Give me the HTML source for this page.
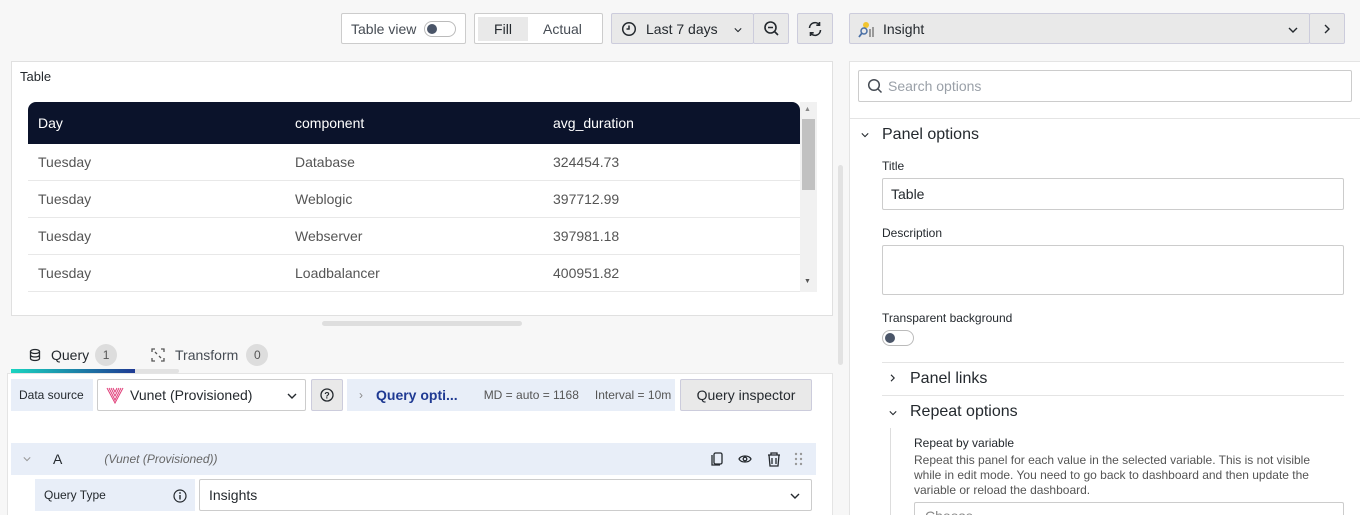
<!DOCTYPE html>
<html style="width:1360px;height:515px;overflow:hidden"><head><style>
*{box-sizing:border-box;margin:0;padding:0}
body{width:1360px;height:515px;overflow:hidden;background:#f7f7f7;font-family:"Liberation Sans",sans-serif;color:#24292e;position:relative;font-size:14px}
.a{position:absolute}
.btn{position:absolute;border:1px solid #ccccdc;border-radius:2px;background:#e9e9e9;display:flex;align-items:center}
.row{position:absolute;left:28px;width:772px;height:37px;border-bottom:1px solid #e8e8e8;display:flex;align-items:center;font-size:14px;color:#555}
.c1{position:absolute;left:10px}.c2{position:absolute;left:267px}.c3{position:absolute;left:525px}
.lbl{font-size:12px;color:#24292e}
.dn{position:absolute;width:10px;height:6px}
</style></head><body>
<svg width="0" height="0" style="position:absolute"><defs><path id="dn" d="M1 1l4 4 4-4" fill="none" stroke="#24292e" stroke-width="1.4"/><path id="rt" d="M1 1l4 4-4 4" fill="none" stroke="#24292e" stroke-width="1.4"/></defs></svg>
<!-- toolbar -->
<div class="a" style="left:341px;top:13px;width:125px;height:31px;border:1px solid #ccc;background:#fff;border-radius:2px;display:flex;align-items:center;padding-left:9px;font-size:14px;color:#464c54">Table view
<div style="margin-left:8px;width:32px;height:16px;border:1px solid #bbb;border-radius:8px;position:relative"><div style="position:absolute;left:2px;top:2px;width:10px;height:10px;border-radius:50%;background:#4a5568"></div></div></div>
<div class="a" style="left:474px;top:13px;width:129px;height:31px;border:1px solid #ccc;background:#fff;border-radius:2px;padding:2px">
<div style="position:absolute;left:3px;top:3px;width:50px;height:24px;background:#e9e9e9;text-align:center;line-height:24px;color:#24292e">Fill</div>
<div style="position:absolute;left:68px;top:3px;line-height:24px;color:#464c54">Actual</div></div>
<div class="btn" style="left:611px;top:13px;width:143px;height:31px;padding-left:9px">
<svg width="16" height="16" viewBox="0 0 16 16"><circle cx="8" cy="8" r="6.3" fill="none" stroke="#24292e" stroke-width="1.5"/><path d="M8 4.5V8H5.5" fill="none" stroke="#24292e" stroke-width="1.5"/></svg>
<span style="margin-left:9px">Last 7 days</span><svg class="dn" style="left:121px;top:13px" viewBox="0 0 10 6" transform="scale(0.8)"><use href="#dn"/></svg></div>
<div class="btn" style="left:753px;top:13px;width:36px;height:31px;justify-content:center">
<svg width="17" height="17" viewBox="0 0 17 17"><circle cx="7.5" cy="7.5" r="5.5" fill="none" stroke="#24292e" stroke-width="1.6"/><path d="M5 7.5h5M11.5 11.5l3.5 3.5" stroke="#24292e" stroke-width="1.6"/></svg></div>
<div class="btn" style="left:797px;top:13px;width:36px;height:31px;justify-content:center">
<svg width="18" height="18" viewBox="0 0 18 18"><path d="M3.5 8a5.5 5.5 0 0 1 10-3M14.5 10a5.5 5.5 0 0 1-10 3" fill="none" stroke="#24292e" stroke-width="1.6"/><path d="M13.5 2v3.2h-3.2M4.5 16v-3.2h3.2" fill="none" stroke="#24292e" stroke-width="1.6"/></svg></div>
<div class="btn" style="left:849px;top:13px;width:461px;height:31px;padding-left:8px">
<svg width="18" height="18" viewBox="0 0 18 18"><circle cx="8" cy="5" r="3" fill="#f2c530"/><rect x="11" y="9" width="2" height="8" fill="#999"/><rect x="14" y="7" width="2" height="10" fill="#999"/><circle cx="6" cy="11" r="3" fill="none" stroke="#4a6fa5" stroke-width="1.5"/><path d="M4 13l-3 4" stroke="#4a6fa5" stroke-width="1.8"/></svg>
<span style="margin-left:7px">Insight</span><svg class="dn" style="left:438px;top:13px" viewBox="0 0 10 6"><use href="#dn"/></svg></div>
<div class="btn" style="left:1309px;top:13px;width:36px;height:31px;justify-content:center"><svg width="7" height="10" viewBox="0 0 7 10"><use href="#rt"/></svg></div>
<!-- table panel -->
<div class="a" style="left:11px;top:61px;width:822px;height:255px;background:#fff;border:1px solid #e0e0e0"></div>
<div class="a" style="left:20px;top:69px;font-size:13px">Table</div>
<div class="a" style="left:28px;top:102px;width:772px;height:42px;background:#0b132b;border-radius:8px 8px 0 0;color:#fff;font-size:14px">
<span class="c1" style="top:13px">Day</span><span class="c2" style="top:13px">component</span><span class="c3" style="top:13px">avg_duration</span></div>
<div class="row" style="top:144px"><span class="c1">Tuesday</span><span class="c2">Database</span><span class="c3">324454.73</span></div>
<div class="row" style="top:181px"><span class="c1">Tuesday</span><span class="c2">Weblogic</span><span class="c3">397712.99</span></div>
<div class="row" style="top:218px"><span class="c1">Tuesday</span><span class="c2">Webserver</span><span class="c3">397981.18</span></div>
<div class="row" style="top:255px"><span class="c1">Tuesday</span><span class="c2">Loadbalancer</span><span class="c3">400951.82</span></div>
<div class="a" style="left:800px;top:102px;width:17px;height:190px;background:#f1f1f1"></div>
<div class="a" style="left:802px;top:119px;width:13px;height:71px;background:#c1c1c1"></div>
<div class="a" style="left:804px;top:106px;font-size:7px;color:#888">&#9650;</div>
<div class="a" style="left:804px;top:278px;font-size:7px;color:#555">&#9660;</div>
<div class="a" style="left:322px;top:321px;width:200px;height:5px;background:#dedede;border-radius:3px"></div>
<div class="a" style="left:838px;top:165px;width:5px;height:200px;background:#e2e2e2;border-radius:3px"></div>
<!-- tabs -->
<div class="a" style="left:28px;top:344px;display:flex;align-items:center;color:#24292e">
<svg width="14" height="14" viewBox="0 0 14 14"><ellipse cx="7" cy="3.5" rx="4.5" ry="2" fill="none" stroke="#24292e" stroke-width="1.3"/><path d="M2.5 3.5v7c0 1.1 2 2 4.5 2s4.5-.9 4.5-2v-7M2.5 7c0 1.1 2 2 4.5 2s4.5-.9 4.5-2" fill="none" stroke="#24292e" stroke-width="1.3"/></svg>
<span style="margin-left:9px">Query</span><span style="margin-left:6px;width:22px;height:22px;border-radius:11px;background:#ddd;font-size:12px;text-align:center;line-height:22px;color:#555">1</span></div>
<div class="a" style="left:151px;top:344px;display:flex;align-items:center;color:#464c54">
<svg width="14" height="14" viewBox="0 0 14 14" fill="none" stroke="#555" stroke-width="1.3"><path d="M1 4V1h3M10 1h3v3M13 10v3h-3M4 13H1v-3M4 4l2 2M10 10l-2-2"/></svg>
<span style="margin-left:10px">Transform</span><span style="margin-left:8px;width:22px;height:22px;border-radius:11px;background:#ddd;font-size:12px;text-align:center;line-height:22px;color:#555">0</span></div>
<div class="a" style="left:11px;top:369px;width:168px;height:4px;background:#e2e2e2;border-radius:0 2px 2px 0"></div>
<div class="a" style="left:11px;top:369px;width:124px;height:4px;background:linear-gradient(90deg,#1ad4c0,#1f3a93)"></div>
<div class="a" style="left:7px;top:373px;width:826px;height:142px;background:#fff;border:1px solid #e4e4e4;border-bottom:none"></div>
<div class="a" style="left:11px;top:379px;width:82px;height:32px;background:#e8eef8;font-size:12px;line-height:32px;padding-left:8px">Data source</div>
<div class="a" style="left:97px;top:379px;width:209px;height:32px;background:#fff;border:1px solid #ccc;border-radius:2px;display:flex;align-items:center;padding-left:8px">
<svg width="18" height="18" viewBox="0 0 18 18" fill="none" stroke="#e0407a" stroke-width="1"><path d="M1 2l8 15 8-15M3 2l6 12 6-12M5 2l4 8 4-8M7 2l2 4 2-4"/></svg>
<span style="margin-left:6px;font-size:14px">Vunet (Provisioned)</span><svg class="dn" style="left:189px;top:13px" viewBox="0 0 10 6"><use href="#dn"/></svg></div>
<div class="btn" style="left:311px;top:379px;width:32px;height:32px;justify-content:center"><svg width="14" height="14" viewBox="0 0 14 14"><circle cx="7" cy="7" r="6" fill="none" stroke="#24292e" stroke-width="1.3"/><text x="7" y="10.5" font-size="9" font-weight="bold" text-anchor="middle" font-family="Liberation Sans" fill="#24292e">?</text></svg></div>
<div class="a" style="left:347px;top:379px;width:328px;height:32px;background:#e8eef8;display:flex;align-items:center;font-size:12px;color:#555">
<span style="margin-left:12px;color:#888">&#8250;</span><span style="margin-left:13px;font-weight:bold;color:#1f3a93;font-size:14px">Query opti...</span><span style="margin-left:26px">MD = auto = 1168</span><span style="margin-left:16px">Interval = 10m</span></div>
<div class="btn" style="left:680px;top:379px;width:132px;height:32px;justify-content:center">Query inspector</div>
<div class="a" style="left:11px;top:443px;width:805px;height:32px;background:#e8eef8;display:flex;align-items:center">
<svg style="margin-left:12px" width="8" height="6" viewBox="0 0 10 6"><path d="M1 1l4 4 4-4" fill="none" stroke="#999" stroke-width="1.3"/></svg><span style="margin-left:22px;font-size:14px">A</span><span style="margin-left:42px;font-size:12px;font-style:italic;color:#666">(Vunet (Provisioned))</span></div>
<svg class="a" style="left:710px;top:451px" width="100" height="16" viewBox="0 0 100 16" fill="none" stroke="#24292e" stroke-width="1.3"><rect x="4" y="2" width="8" height="11" rx="1.5"/><path d="M2 4v10h8"/><path d="M29 8c2-4 10-4 12 0c-2 4-10 4-12 0z"/><circle cx="35" cy="8" r="1.8"/><path d="M58 4h12M61 4V2h6v2M59 4l1 11h8l1-11M62 7v6M66 7v6"/><g fill="#999" stroke="none"><circle cx="86" cy="3" r="1.2"/><circle cx="91" cy="3" r="1.2"/><circle cx="86" cy="8" r="1.2"/><circle cx="91" cy="8" r="1.2"/><circle cx="86" cy="13" r="1.2"/><circle cx="91" cy="13" r="1.2"/></g></svg>
<div class="a" style="left:35px;top:479px;width:160px;height:32px;background:#e8eef8;font-size:12px;line-height:32px;padding-left:9px">Query Type</div>
<svg class="a" style="left:173px;top:489px" width="14" height="14" viewBox="0 0 14 14"><circle cx="7" cy="7" r="6" fill="none" stroke="#24292e" stroke-width="1.2"/><path d="M7 6v4.5" stroke="#24292e" stroke-width="1.4"/><circle cx="7" cy="4" r=".9" fill="#24292e"/></svg>
<div class="a" style="left:199px;top:479px;width:613px;height:32px;background:#fff;border:1px solid #ccc;border-radius:2px;line-height:30px;padding-left:9px">Insights<svg class="dn" style="left:590px;top:13px" viewBox="0 0 10 6"><use href="#dn"/></svg></div>
<!-- right options -->
<div class="a" style="left:849px;top:61px;width:511px;height:454px;background:#fff;border-left:1px solid #e4e4e4;border-top:1px solid #e4e4e4"></div>
<div class="a" style="left:858px;top:70px;width:494px;height:32px;border:1px solid #ccc;border-radius:2px;display:flex;align-items:center;padding-left:8px">
<svg width="16" height="16" viewBox="0 0 16 16" fill="none" stroke="#464c54" stroke-width="1.5"><circle cx="7" cy="7" r="5.3"/><path d="M11 11l3.5 3.5"/></svg><span style="margin-left:5px;color:#9aa0a8">Search options</span></div>
<div class="a" style="left:849px;top:118px;width:511px;height:1px;background:#e4e4e4"></div>
<svg class="a" style="left:861px;top:132px" width="8" height="6" viewBox="0 0 10 6"><use href="#dn"/></svg>
<div class="a" style="left:882px;top:126px;font-size:16px">Panel options</div>
<div class="a lbl" style="left:882px;top:159px">Title</div>
<div class="a" style="left:882px;top:178px;width:462px;height:32px;border:1px solid #ccc;border-radius:2px;line-height:30px;padding-left:8px">Table</div>
<div class="a lbl" style="left:882px;top:226px">Description</div>
<div class="a" style="left:882px;top:245px;width:462px;height:50px;border:1px solid #ccc;border-radius:2px"></div>
<div class="a lbl" style="left:882px;top:311px">Transparent background</div>
<div class="a" style="left:882px;top:330px;width:32px;height:16px;border:1px solid #bbb;border-radius:8px"><div style="position:absolute;left:2px;top:2px;width:10px;height:10px;border-radius:50%;background:#4a5568"></div></div>
<div class="a" style="left:882px;top:362px;width:462px;height:1px;background:#e4e4e4"></div>
<svg class="a" style="left:890px;top:374px" width="6" height="8" viewBox="0 0 7 10"><use href="#rt"/></svg>
<div class="a" style="left:910px;top:370px;font-size:16px">Panel links</div>
<div class="a" style="left:882px;top:395px;width:462px;height:1px;background:#e4e4e4"></div>
<svg class="a" style="left:889px;top:410px" width="8" height="6" viewBox="0 0 10 6"><use href="#dn"/></svg>
<div class="a" style="left:910px;top:403px;font-size:16px">Repeat options</div>
<div class="a" style="left:890px;top:428px;width:1px;height:87px;background:#ddd"></div>
<div class="a lbl" style="left:914px;top:436px">Repeat by variable</div>
<div class="a" style="left:914px;top:453px;width:420px;font-size:12px;line-height:15px;color:#555">Repeat this panel for each value in the selected variable. This is not visible while in edit mode. You need to go back to dashboard and then update the variable or reload the dashboard.</div>
<div class="a" style="left:914px;top:502px;width:430px;height:13px;border:1px solid #ccc;border-bottom:none;border-radius:2px 2px 0 0;overflow:hidden;padding:6px 10px;color:#888;line-height:14px">Choose</div>
</body></html>
